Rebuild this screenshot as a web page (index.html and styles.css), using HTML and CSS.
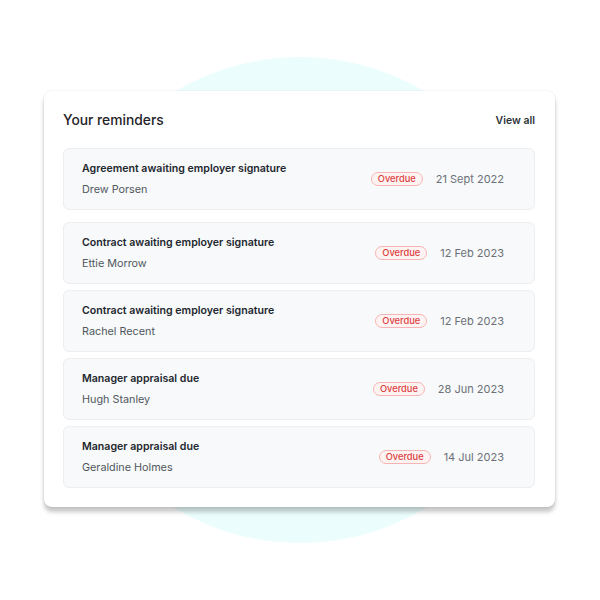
FILE: index.html
```html
<!DOCTYPE html>
<html>
<head>
<meta charset="utf-8">
<link rel="stylesheet" href="styles.css">
</head>
<body>
<div class="stage">
  <div class="circle"></div>
  <div class="card">
    <div class="header">
      <h2 class="title">Your reminders</h2>
      <a class="view-all">View all</a>
    </div>
    <div class="list">
      <div class="item first">
        <div class="info">
          <div class="item-title">Agreement awaiting employer signature</div>
          <div class="item-sub">Drew Porsen</div>
        </div>
        <div class="meta"><span class="badge">Overdue</span><span class="date">21 Sept 2022</span></div>
      </div>
      <div class="item">
        <div class="info">
          <div class="item-title">Contract awaiting employer signature</div>
          <div class="item-sub">Ettie Morrow</div>
        </div>
        <div class="meta"><span class="badge">Overdue</span><span class="date">12 Feb 2023</span></div>
      </div>
      <div class="item">
        <div class="info">
          <div class="item-title">Contract awaiting employer signature</div>
          <div class="item-sub">Rachel Recent</div>
        </div>
        <div class="meta"><span class="badge">Overdue</span><span class="date">12 Feb 2023</span></div>
      </div>
      <div class="item">
        <div class="info">
          <div class="item-title">Manager appraisal due</div>
          <div class="item-sub">Hugh Stanley</div>
        </div>
        <div class="meta"><span class="badge">Overdue</span><span class="date">28 Jun 2023</span></div>
      </div>
      <div class="item">
        <div class="info">
          <div class="item-title">Manager appraisal due</div>
          <div class="item-sub">Geraldine Holmes</div>
        </div>
        <div class="meta"><span class="badge">Overdue</span><span class="date">14 Jul 2023</span></div>
      </div>
    </div>
  </div>
</div>
</body>
</html>
```

FILE: styles.css
```css
html, body {
  margin: 0;
  padding: 0;
  background: #ffffff;
  font-family: Inter, "Noto Sans", "Liberation Sans", sans-serif;
}

.stage {
  position: relative;
  width: 600px;
  height: 600px;
  padding-top: 91px;
  box-sizing: border-box;
  overflow: hidden;
}

.circle {
  position: absolute;
  left: 57px;
  top: 57px;
  width: 486px;
  height: 486px;
  border-radius: 50%;
  background: #ebfdfd;
}

.card {
  position: relative;
  margin-left: 44px;
  width: 511px;
  box-sizing: border-box;
  background: #ffffff;
  border-radius: 8px;
  padding: 18px 20px 19px 19px;
  box-shadow: 0 5px 4px rgba(0, 0, 0, 0.22), 0 0 2px rgba(0, 0, 0, 0.12);
}

.header {
  display: flex;
  align-items: center;
  justify-content: space-between;
  height: 22px;
  margin-bottom: 17px;
}

.title {
  margin: 0;
  font-size: 13.8px;
  font-weight: 500;
  color: #1f2328;
}

.view-all {
  font-size: 10.5px;
  font-weight: 600;
  color: #2d3339;
}

.list {
  display: flex;
  flex-direction: column;
  gap: 6px;
}

.item {
  display: flex;
  align-items: center;
  justify-content: space-between;
  height: 62px;
  box-sizing: border-box;
  padding: 0 30px 0 18px;
  background: #f8f9fa;
  border: 1px solid #eceef1;
  border-radius: 6px;
}

.item.first {
  margin-bottom: 6px;
}

.info {
  display: flex;
  flex-direction: column;
  gap: 5px;
}

.item-title {
  font-size: 10.6px;
  line-height: 16px;
  font-weight: 600;
  color: #22272e;
}

.item-sub {
  font-size: 10.8px;
  line-height: 16px;
  font-weight: 400;
  color: #505760;
}

.meta {
  display: flex;
  align-items: center;
  gap: 13px;
}

.badge {
  display: inline-block;
  font-size: 9.3px;
  line-height: 12px;
  font-weight: 500;
  color: #dc3e3e;
  background: #fef3f3;
  border: 1px solid #f8b4b4;
  border-radius: 8px;
  padding: 0 6px;
}

.date {
  font-size: 11px;
  color: #6b7079;
}
```
